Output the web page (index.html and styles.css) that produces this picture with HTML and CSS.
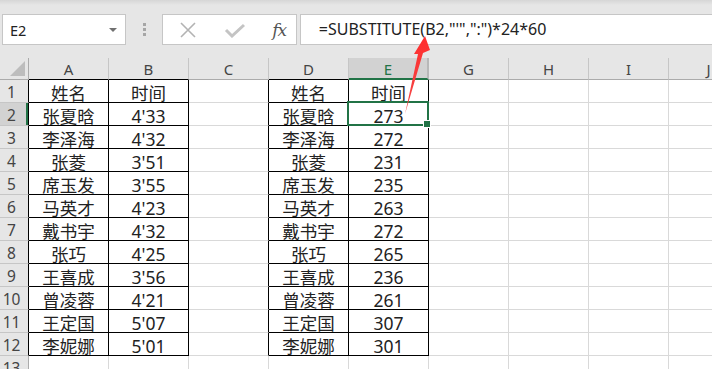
FILE: index.html
```html
<!DOCTYPE html>
<html lang="zh-CN">
<head>
    <meta charset="UTF-8">
    <title>工作表</title>
    <link rel="stylesheet" href="styles.css">
</head>
<body>
    <div class="window">
        <div class="toolbar">
            <div class="name-box">
                <span>E2</span>
                <span class="caret"></span>
            </div>
            <div class="grip"><i></i><i></i><i></i></div>
            <div class="fx-box">
                <svg class="ico" width="18" height="18" viewBox="0 0 18 18">
                    <path d="M2 2 L16 16 M16 2 L2 16" stroke="#b3b3b3" stroke-width="1.6" fill="none"/>
                </svg>
                <svg class="ico" width="22" height="16" viewBox="0 0 22 16">
                    <path d="M2 8 L8 14 L20 3" stroke="#c4c4c4" stroke-width="3" fill="none"/>
                </svg>
                <span class="fx">fx</span>
            </div>
            <div class="formula">=SUBSTITUTE(B2,"'",":")*24*60</div>
        </div>

        <div class="sheet" id="sheet"></div>

        <svg class="arrow" width="712" height="369" viewBox="0 0 712 369">
            <defs>
                <linearGradient id="red" x1="0" y1="0" x2="0" y2="1">
                    <stop offset="0" stop-color="#ff2d2d"/>
                    <stop offset="1" stop-color="#f24a4a"/>
                </linearGradient>
            </defs>
            <polygon points="405,114 423,53 430,50 425,36 414,54 418,54" fill="url(#red)"/>
        </svg>
    </div>

    <script>
        // 数据
        const names = ['张夏晗', '李泽海', '张菱', '席玉发', '马英才', '戴书宇', '张巧', '王喜成', '曾凌蓉', '王定国', '李妮娜'];
        const times = ["4'33", "4'32", "3'51", "3'55", "4'23", "4'32", "4'25", "3'56", "4'21", "5'07", "5'01"];
        const mins = [273, 272, 231, 235, 263, 272, 265, 236, 261, 307, 301];
        const cols = ['A', 'B', 'C', 'D', 'E', 'G', 'H', 'I', 'J'];

        const sheet = document.getElementById('sheet');

        function cell(cls, text) {
            const d = document.createElement('div');
            d.className = 'cell ' + cls;
            if (text !== undefined) d.textContent = text;
            sheet.appendChild(d);
            return d;
        }

        // 列标题
        cell('corner').innerHTML = '<span class="tri"></span>';
        cols.forEach(c => {
            let cls = 'col-head';
            if (c === 'A' || c === 'B' || c === 'D') cls += ' top-box';
            if (c === 'E') cls += ' active';
            cell(cls, c);
        });

        // 行
        for (let r = 1; r <= 13; r++) {
            const inTable = r <= 12;
            let head = 'row-head';
            if (inTable) head += ' edge';
            if (r === 2) head += ' active';
            cell(head, r);

            cols.forEach(c => {
                let cls = '';
                let text = '';
                if (inTable && (c === 'A' || c === 'B' || c === 'D' || c === 'E')) cls = 'box';
                if (inTable && c === 'C') cls = 'edge';
                if (inTable) {
                    if (c === 'A' || c === 'D') text = r === 1 ? '姓名' : names[r - 2];
                    if (c === 'B') text = r === 1 ? '时间' : times[r - 2];
                    if (c === 'E') text = r === 1 ? '时间' : mins[r - 2];
                }
                const d = cell(cls, text);
                if (r === 2 && c === 'E') d.classList.add('selected');
            });
        }
    </script>
</body>
</html>
```

FILE: styles.css
```css
:root {
    --bar-bg: #e6e6e6;
    --grid: #d9d9d9;
    --head-line: #c6c6c6;
    --green: #217346;
    --text-color: #222;
}

* {
    box-sizing: border-box;
    margin: 0;
    padding: 0;
}

body {
    background: #fff;
    font-family: 'Noto Sans', 'Noto Sans CJK SC', sans-serif;
    color: var(--text-color);
    overflow: hidden;
}

.window {
    position: relative;
    width: 712px;
    height: 369px;
    overflow: hidden;
}

/* 编辑栏 */
.toolbar {
    height: 58px;
    background: linear-gradient(#d6d6d6 0, #e6e6e6 5px);
    display: flex;
    align-items: flex-start;
    padding-top: 14px;
}

.name-box {
    margin-left: 2px;
    width: 126px;
    height: 31px;
    background: #fff;
    border: 1px solid #c6c6c6;
    display: flex;
    align-items: center;
    justify-content: space-between;
    padding: 0 8px 0 7px;
    font-size: 14.5px;
}

.caret {
    width: 0;
    height: 0;
    border-left: 4px solid transparent;
    border-right: 4px solid transparent;
    border-top: 4px solid #707070;
}

.grip {
    width: 37px;
    height: 31px;
    display: flex;
    flex-direction: column;
    align-items: center;
    justify-content: center;
    gap: 2px;
}

.grip i {
    width: 3px;
    height: 3px;
    background: #a6a6a6;
}

.fx-box {
    width: 137px;
    height: 31px;
    background: #fff;
    border: 1px solid #c6c6c6;
    display: flex;
    align-items: center;
    padding-left: 16px;
    gap: 27px;
}

.ico {
    display: block;
}

.fx {
    font-family: 'DejaVu Serif', 'Liberation Serif', serif;
    font-style: italic;
    font-size: 17px;
    color: #555;
    margin-left: -1px;
    letter-spacing: -1px;
}

.formula {
    margin-left: 3px;
    width: 420px;
    height: 31px;
    background: #fff;
    border: 1px solid #c6c6c6;
    border-right: none;
    padding-left: 18px;
    font-size: 16px;
    line-height: 29px;
}

/* 工作表 */
.sheet {
    display: grid;
    grid-template-columns: 29px repeat(9, 80px);
    grid-template-rows: 22px;
    grid-auto-rows: 23px;
}

.cell {
    border-right: 1px solid var(--grid);
    border-bottom: 1px solid var(--grid);
    text-align: center;
    font-size: 17.5px;
    line-height: 18px;
    padding-top: 4px;
    white-space: nowrap;
    position: relative;
}

.corner,
.col-head {
    background: var(--bar-bg);
    border-right: 1px solid var(--head-line);
    border-bottom: 1px solid #ababab;
    font-size: 15px;
    color: #444;
    line-height: 20px;
    padding-top: 1px;
}

.corner {
    border-right-color: #ababab;
}

.tri {
    position: absolute;
    right: 3px;
    bottom: 3px;
    width: 0;
    height: 0;
    border-left: 15px solid transparent;
    border-bottom: 15px solid #bdbdbd;
}

.col-head.top-box {
    border-bottom-color: #000;
}

.col-head.active {
    background: #d2d2d2;
    color: var(--green);
    border-bottom: 2px solid var(--green);
    border-right: 2px solid #b8b8b8;
}

.row-head {
    background: var(--bar-bg);
    border-right: 1px solid #ababab;
    border-bottom: 1px solid var(--head-line);
    font-size: 15.5px;
    color: #444;
    padding-right: 5px;
    padding-top: 3px;
}

.row-head.edge {
    border-right-color: #000;
}

.row-head.active {
    background: #d2d2d2;
    box-shadow: inset -2px 0 0 var(--green);
}

.edge {
    border-right-color: #000;
}

.box {
    border-right-color: #000;
    border-bottom-color: #000;
}

.selected::after {
    content: '';
    position: absolute;
    left: -2px;
    top: -2px;
    right: -1px;
    bottom: -1px;
    border: 2px solid var(--green);
}

.selected::before {
    content: '';
    position: absolute;
    right: -3px;
    bottom: -3px;
    width: 6px;
    height: 6px;
    background: var(--green);
    border: 1px solid #fff;
    z-index: 1;
}

.arrow {
    position: absolute;
    left: 0;
    top: 0;
    pointer-events: none;
}
```
